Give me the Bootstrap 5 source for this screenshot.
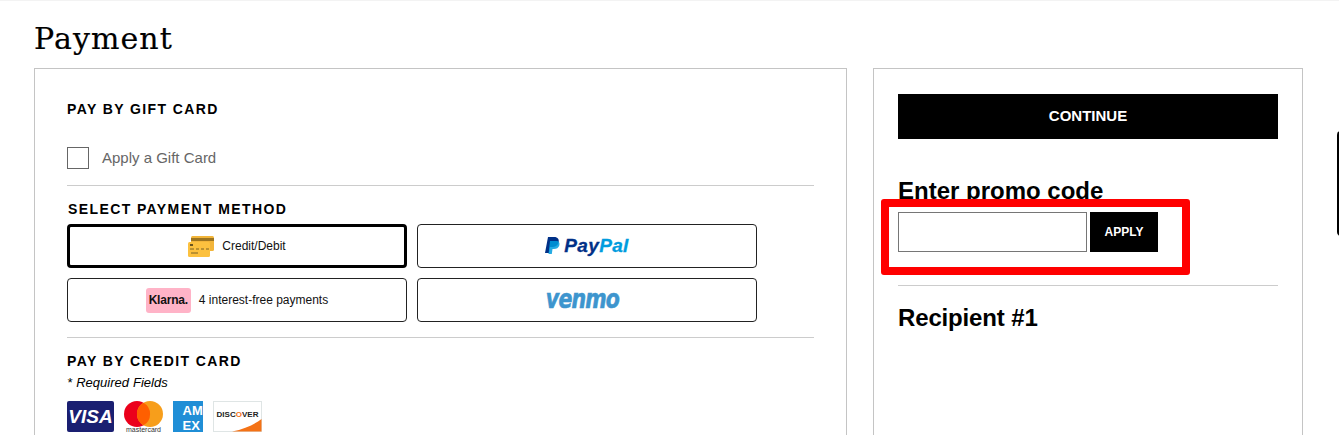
<!doctype html>
<html lang="en"><head><meta charset="utf-8"><title>Payment</title>
<link href="https://cdn.jsdelivr.net/npm/bootstrap@5.3.0/dist/css/bootstrap.min.css" rel="stylesheet">
<style>
html,body{height:435px;overflow:hidden;background:#fff}
body{font-family:"Liberation Sans",Arial,sans-serif;color:#000;position:relative;border-top:1px solid #f3f3f3}
.page-wrap{padding:0 36px 0 34px}
.page-title{font-family:"DejaVu Serif",serif;font-weight:400;font-size:30px;line-height:34px;height:67px;margin:0;padding-top:21px;letter-spacing:1.1px;-webkit-text-stroke:.2px currentColor}
.main-row{gap:26px;align-items:flex-start}
.box{border:1px solid #c4c4c4;height:500px}
.box-left{width:813px;padding:31px 32px 30px}
.box-right{width:430px;padding:25px 24px}
.sec-title{font-size:14px;line-height:18px;font-weight:700;letter-spacing:1.4px;margin:0}
.gift-row{margin-top:29px;height:22px;gap:13px}
.gift-box{width:22px;height:22px;border:1px solid #666}
.gift-label{font-size:15px;color:#666}
.rule{border:0;border-top:1px solid #ccc;opacity:1;margin:0}
.rule-a{margin-top:16px}
.select-title{margin:14px 0 6px 1px}
.pay-grid{display:grid;grid-template-columns:340px 340px;grid-auto-rows:44px;gap:10px}
.pay-opt{border:1px solid #222;border-radius:4px;background:#fff;font-size:12px;gap:8px;padding:0;color:#111}
.pay-opt.is-on{border:3px solid #000}
.klarna-tag{width:45px;height:25px;background:#ffb3c7;border-radius:3px;font-size:12px;font-weight:700;letter-spacing:-.2px}
.pp-logo{font-size:19px;font-weight:700;font-style:italic;letter-spacing:.35px;color:#003087;gap:4px;-webkit-text-stroke:.3px currentColor}
.pp-logo b{color:#009cde;font-weight:700}
.vm-logo{font-family:"DejaVu Sans",sans-serif;font-size:20.500px;font-weight:700;font-style:italic;color:#3d95ce;letter-spacing:-.8px;line-height:1;margin:-2px 9px 0 0;-webkit-text-stroke:.5px currentColor;transform:scaleY(1.3)}
.rule-b{margin-top:15px}
.cc-title{margin-top:14px}
.req-note{font-size:13px;font-style:italic;line-height:16px;margin-top:5px;word-spacing:.5px}
.card-logos{gap:10px;margin-top:10px;align-items:flex-start}
.go-btn{height:45px;background:#000;color:#fff;border:0;border-radius:0;font-size:15px;font-weight:700;width:380px;padding:0}
.go-btn:hover{background:#000;color:#fff}
.promo-head{font-size:24px;line-height:28px;font-weight:700;margin:38px 0 0}
.promo-row{gap:3px;margin-top:7px}
.promo-input{width:189px;height:40px;border:1px solid #767676;border-radius:0;padding:0 8px}
.promo-btn{width:68px;height:40px;background:#000;color:#fff;border:0;border-radius:0;font-size:12px;font-weight:700;padding:0}
.promo-btn:hover{background:#000;color:#fff}
.rule-c{margin-top:33px;width:380px}
.recipient{font-size:24px;line-height:28px;font-weight:700;margin:18px 0 0;letter-spacing:-.15px}
.red-mark{position:absolute;left:881px;top:198px;width:309px;height:76px;border:8px solid #f00;border-radius:3px;pointer-events:none}
.edge-tab{position:absolute;left:1337px;top:130px;width:10px;height:105px;background:#000;border-radius:4px}
</style></head>
<body>
<div class="page-wrap">
<h1 class="page-title">Payment</h1>
<div class="d-flex main-row">
 <section class="box box-left">
  <h2 class="sec-title">PAY BY GIFT CARD</h2>
  <div class="d-flex align-items-center gift-row"><span class="gift-box"></span><span class="gift-label">Apply a Gift Card</span></div>
  <hr class="rule rule-a">
  <h2 class="sec-title select-title">SELECT PAYMENT METHOD</h2>
  <div class="pay-grid">
   <button class="btn pay-opt is-on d-flex align-items-center justify-content-center">
    <svg width="26" height="21" viewBox="0 0 26 21"><rect x="3" y="0" width="23" height="15" rx="1.5" fill="#f2b53a"/><rect x="3" y="2" width="23" height="3" fill="#9c7420"/><rect x="0" y="6" width="22" height="15" rx="1.5" fill="#fcc13f"/><rect x="2" y="8" width="3" height="2" fill="#6b5520"/><path d="M2 13h4M8 13h3M13 13h3M18 13h3M3 17h7" stroke="#7a6225" stroke-width="1"/></svg>
    <span>Credit/Debit</span></button>
   <button class="btn pay-opt d-flex align-items-center justify-content-center">
    <span class="pp-logo d-flex align-items-center"><svg width="15" height="18" viewBox="0 0 15 18"><path d="M3 0h6c4 0 5.500 2.500 4.500 5.500C12.500 9 10 10 7 10H5l-1 6H0z" fill="#003087"/><path d="M5 4h6c3 0 4 2 3.300 4.500C13.500 11 11.500 12 9 12H7.500L6.800 17H3.500z" fill="#009cde" opacity=".85"/></svg><span>Pay<b>Pal</b></span></span></button>
   <button class="btn pay-opt d-flex align-items-center justify-content-center">
    <span class="klarna-tag d-flex align-items-center justify-content-center">Klarna.</span><span>4 interest-free payments</span></button>
   <button class="btn pay-opt d-flex align-items-center justify-content-center"><span class="vm-logo">venmo</span></button>
  </div>
  <hr class="rule rule-b">
  <h2 class="sec-title cc-title">PAY BY CREDIT CARD</h2>
  <div class="req-note">*&nbsp;Required Fields</div>
  <div class="d-flex card-logos">
   <svg width="47" height="31" viewBox="0 0 47 31"><rect width="47" height="31" rx="2" fill="#1a1f71"/><text x="23.500" y="22" text-anchor="middle" font-family="Liberation Sans" font-size="19" font-weight="700" font-style="italic" fill="#fff">VISA</text></svg>
   <svg width="39" height="32" viewBox="0 0 39 32"><circle cx="13" cy="13" r="13" fill="#eb001b"/><circle cx="26" cy="13" r="13" fill="#f79e1b"/><path d="M19.500 1.700a13 13 0 0 1 0 22.600a13 13 0 0 1 0-22.600z" fill="#ff5f00"/><text x="19.500" y="31" text-anchor="middle" font-family="Liberation Sans" font-size="7" fill="#333">mastercard</text></svg>
   <svg width="30" height="31" viewBox="0 0 30 31"><rect width="30" height="31" fill="#1f8ed6"/><text x="9.500" y="14" font-family="Liberation Sans" font-size="13" font-weight="700" fill="#fff">AM</text><text x="9.500" y="29" font-family="Liberation Sans" font-size="13" font-weight="700" fill="#fff">EX</text></svg>
   <svg width="49" height="31" viewBox="0 0 49 31"><rect x=".5" y=".5" width="48" height="30" fill="#fff" stroke="#dfe5e5"/><path d="M19 30.500C32 28 42 23 48.500 18v12.500z" fill="#f47216"/><text x="24.500" y="16" text-anchor="middle" font-family="Liberation Sans" font-size="8" font-weight="700" fill="#222">DISC<tspan fill="#f47216">O</tspan>VER</text></svg>
  </div>
 </section>
 <aside class="box box-right">
  <button class="btn go-btn d-block">CONTINUE</button>
  <h2 class="promo-head">Enter promo code</h2>
  <div class="d-flex promo-row"><input class="promo-input" type="text" aria-label="Promo code"><button class="btn promo-btn">APPLY</button></div>
  <hr class="rule rule-c">
  <h2 class="recipient">Recipient #1</h2>
 </aside>
</div>
</div>
<div class="red-mark"></div>
<div class="edge-tab"></div>
</body></html>
